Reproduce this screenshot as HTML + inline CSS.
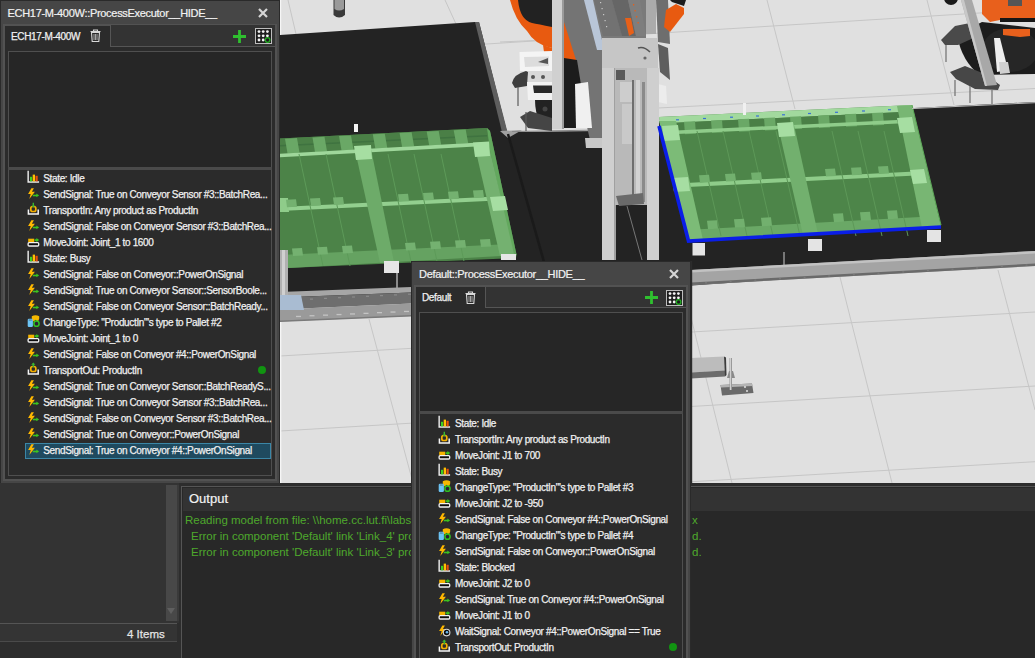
<!DOCTYPE html>
<html><head><meta charset="utf-8">
<style>
*{margin:0;padding:0;box-sizing:border-box}
html,body{width:1035px;height:658px;overflow:hidden;background:#2d2d2d;font-family:"Liberation Sans",sans-serif}
.a{position:absolute}
.t{position:absolute;white-space:pre;color:#f0f0f0;font-size:10px;letter-spacing:-0.36px;line-height:12px;-webkit-text-stroke:0.25px #f0f0f0}
.ttl{position:absolute;white-space:pre;color:#f2f2f2;font-size:11px;letter-spacing:-0.3px;line-height:13px;-webkit-text-stroke:0.2px #f2f2f2}
.row{position:absolute;height:16px;width:240px}
.row svg{position:absolute;left:0;top:2px;overflow:visible}
.row span{position:absolute;left:16px;top:2.5px;white-space:pre;color:#f0f0f0;font-size:10px;letter-spacing:-0.36px;line-height:12px;-webkit-text-stroke:0.25px #f0f0f0}
#llist .row span{left:15.5px}
.g{position:absolute;white-space:pre;color:#4ea82c;font-size:11.5px;line-height:14px}
</style></head>
<body>
<svg width="0" height="0" style="position:absolute">
<defs>
<symbol id="i-state" viewBox="0 0 13 12" overflow="visible">
<path d="M0.15 -1.2V10H11.1" stroke="#f0f0f0" stroke-width="1.4" fill="none"/>
<rect x="2" y="4.8" width="2.1" height="4.6" fill="#3cd020"/>
<rect x="4.7" y="2.6" width="2.3" height="6.8" fill="#ffc000"/>
<rect x="7.5" y="3.8" width="2.2" height="5.6" fill="#e8500a"/>
</symbol>
<symbol id="i-sig" viewBox="0 0 13 12" overflow="visible">
<path d="M3.4 0.2H5.9L3.9 3.8H6.9L1.3 10.9L2.7 5.9H0.1Z" fill="#ffb800"/>
<path d="M4.8 7.5H9" stroke="#3cc420" stroke-width="1.6"/>
<path d="M8.4 5.5L11.1 7.5L8.4 9.3Z" fill="#3cc420"/>
</symbol>
<symbol id="i-in" viewBox="0 0 13 12" overflow="visible">
<path d="M0.4 5.5V9.9H10.2V5.5" stroke="#f4f4f4" stroke-width="1.5" fill="none"/>
<rect x="2.8" y="2.5" width="5" height="5" rx="1.8" stroke="#f5b000" stroke-width="1.7" fill="none"/>
<path d="M4.6 -1.2H6V1.8H7.2L5.3 3.6L3.4 1.8H4.6Z" fill="#3cb830"/>
</symbol>
<symbol id="i-out" viewBox="0 0 13 12" overflow="visible">
<path d="M0.4 5.5V9.9H10.2V5.5" stroke="#f4f4f4" stroke-width="1.5" fill="none"/>
<rect x="2.8" y="2.5" width="5" height="5" rx="1.8" stroke="#f5b000" stroke-width="1.7" fill="none"/>
<path d="M5.3 -1.4L7.4 0.8H6V3.2H4.6V0.8H3.2Z" fill="#3cb830"/>
</symbol>
<symbol id="i-move" viewBox="0 0 13 12" overflow="visible">
<rect x="0.2" y="2.7" width="6" height="3.8" fill="#f5b400"/>
<path d="M6.6 4.1H9" stroke="#3cc420" stroke-width="1.7"/>
<path d="M8.4 1.9L11.2 4.1L8.4 6.3Z" fill="#3cc420"/>
<rect x="0.1" y="6.7" width="10.6" height="3.3" rx="1" stroke="#f2f2f2" stroke-width="1.3" fill="#0e0e0e"/>
</symbol>
<symbol id="i-chg" viewBox="0 0 13 12" overflow="visible">
<path d="M3.8 0.2Q7.5 -1.6 11.2 0.2V2.5Q11 5 9 5.4L7.5 3.8L5.8 5.5Q3.8 4.5 3.8 2.2Z" fill="#f5b800"/>
<rect x="-0.3" y="2.7" width="5.2" height="8.3" rx="1.2" fill="#6cc4f4"/>
<rect x="0.8" y="3.6" width="3" height="0.9" fill="#4a6a80"/>
<circle cx="8.5" cy="7.7" r="2.6" stroke="#30c020" stroke-width="1.5" fill="#2a1f33"/>
</symbol>
<symbol id="i-wait" viewBox="0 0 13 12" overflow="visible">
<path d="M3.4 0.4H5.9L3.9 4H6.4L1.3 11L2.7 6.1H0.1Z" fill="#ffb800"/>
<circle cx="7.6" cy="7.6" r="3.3" stroke="#d8d8d8" stroke-width="1.1" fill="#0c0c0c"/>
<circle cx="8" cy="7.3" r="1.3" fill="#6ab8f0"/>
</symbol>
<symbol id="i-trash" viewBox="0 0 11 13">
<path d="M0.5 2.5H10.5M3.5 2.5V1H7.5V2.5" stroke="#d8d8d8" stroke-width="1.1" fill="none"/>
<path d="M1.5 3.5H9.5L8.8 12.5H2.2Z" stroke="#d8d8d8" stroke-width="1.1" fill="none"/>
<path d="M4 5V11M5.5 5V11M7 5V11" stroke="#d8d8d8" stroke-width="0.7"/>
</symbol>
<symbol id="i-grid" viewBox="0 0 17 16">
<rect x="0.5" y="0.5" width="16" height="15" fill="#1e1e1e" stroke="#bdbdbd"/>
<g fill="#f4f4f4"><circle cx="4" cy="3.6" r="1.4"/><circle cx="8.2" cy="3.6" r="1.4"/><circle cx="12.4" cy="3.6" r="1.4"/>
<circle cx="4" cy="7.8" r="1.4"/><circle cx="8.2" cy="7.8" r="1.4"/><circle cx="12.4" cy="7.8" r="1.4"/>
<circle cx="4" cy="12" r="1.4"/><circle cx="8.2" cy="12" r="1.4"/></g>
<circle cx="12.6" cy="12" r="2.3" stroke="#22b022" stroke-width="1.2" fill="none"/>
</symbol>
<symbol id="i-plus" viewBox="0 0 13 13">
<path d="M6.5 0V13M0 6.5H13" stroke="#2fc02f" stroke-width="2.8"/>
</symbol>
<symbol id="i-x" viewBox="0 0 10 10">
<path d="M1 1L9 9M9 1L1 9" stroke="#d6d6d6" stroke-width="2.2"/>
</symbol>
</defs>
</svg>

<!-- 3D viewport -->
<div class="a" id="vp" style="left:280px;top:0;width:755px;height:483px;overflow:hidden;background:#e0e0e0">
<svg width="755" height="483" viewBox="280 0 755 483" style="position:absolute;left:0;top:0">
<rect x="280" y="0" width="755" height="483" fill="#e0e0e0"/>
<g stroke="#c6c6c6" stroke-width="1" fill="none">
<path d="M280 57L1035 9.5"/>
<path d="M500 42L545 40"/>
<path d="M600 111L1035 88.5"/>
<path d="M280 356L1035 312"/>
<path d="M280 431L1035 386"/>
<path d="M767 0L795 109"/>
<path d="M927 0L954 105"/>
<path d="M445 0L456 24"/>
<path d="M288 0L296 34"/>
<path d="M369 319L413 483"/>
<path d="M840 277L892 483"/>
<path d="M998 270L1035 410"/>
<path d="M692 481.7L1035 461.7"/>
<path d="M681 277L732 483"/>
</g>
<rect x="280" y="0" width="1.2" height="483" fill="#f6f6f6"/>
<!-- conveyors -->
<path d="M280 35L475 22L479 22L507 132L600 131L600 300L280 300Z" fill="#232323"/>
<path d="M598 124L1035 102L1035 262L598 292Z" fill="#232323"/>
<path d="M475 22L479 22L507.5 132L502 132Z" fill="#5e5e5e"/>
<path d="M500 131L522 130L508 138Z" fill="#a0a0a0"/>
<path d="M508 134L544 262" stroke="#1a1a1a" stroke-width="2.5"/>
<path d="M512 131.5L600 130" stroke="#8a8a8a" stroke-width="1"/>
<!-- left robot -->
<path d="M510 0H552V48Q535 45 527 31Q515 20 510 0Z" fill="#e85a10"/>
<path d="M518 0H552V27Q538 24 532 23Q520 20 518 0Z" fill="#222"/>
<path d="M543 45L552 48V53L544 52Z" fill="#e85a10"/>
<path d="M519.5 52L552 51V71L520 71Z" fill="#f4f4f4"/>
<path d="M524 57L549 56.5V66L525 67Z" fill="#dcdcdc"/>
<path d="M538 62L548 58V64Z" fill="#555"/>
<path d="M528 71H552V82H528Z" fill="#d8d8d8"/>
<circle cx="533" cy="77" r="2" fill="#555"/><circle cx="543" cy="77" r="2" fill="#555"/>
<path d="M512 83Q514 74 526 71L528 72L527 86L515 88Z" fill="#3e3e3e"/>
<path d="M518 87V106" stroke="#5a5a5a" stroke-width="1.2"/>
<path d="M527 82H552V100H528Z" fill="#f2f2f2"/>
<path d="M533 85.5H552V93H534Z" fill="#2a2a2a"/>
<path d="M535 100H552V124H540Q535 112 535 100Z" fill="#222"/>
<circle cx="545" cy="109" r="2.5" fill="#444"/>
<path d="M520 117L530 111L552 118V131L528 128Z" fill="#454545"/>
<path d="M526 112V131" stroke="#5a5a5a" stroke-width="1.2"/>
<!-- gantry -->
<path d="M558 0H600L603 40L602 140L590 140Z" fill="#747474"/>
<path d="M584 0H594L603 40L602 50L597 50Z" fill="#b9c6d8"/>
<path d="M564 22L576 60H564Z" fill="#e85a10"/>
<path d="M564 58L577 60L588 128H564Z" fill="#1c1c1c"/>
<path d="M575 84L588 82L592 128L576 128Z" fill="#f0f0f0"/>
<rect x="552" y="0" width="12" height="129" fill="#d0d0d0"/>
<rect x="562" y="0" width="2" height="129" fill="#9a9a9a"/>
<path d="M593 0H646V40H602Z" fill="#7a7a7a"/>
<path d="M594 0H612L622 36H603Z" fill="#727272"/>
<path d="M612 0H628L636 36H622Z" fill="#666"/>
<path d="M628 0H640L646 36H636Z" fill="#7e7e7e"/>
<g fill="#c8c8c8"><rect x="600" y="2" width="1.2" height="1.2"/><rect x="601.5" y="8" width="1.2" height="1.2"/><rect x="603" y="14" width="1.2" height="1.2"/><rect x="604.5" y="20" width="1.2" height="1.2"/><rect x="606" y="26" width="1.2" height="1.2"/></g>
<g fill="#e86018"><rect x="633" y="4" width="1.2" height="1.5"/><rect x="634.5" y="10" width="1.2" height="1.5"/><rect x="636" y="16" width="1.2" height="1.5"/><rect x="637.5" y="22" width="1.2" height="1.5"/></g>
<path d="M625 18L631 18L634 33L629 36Z" fill="#e86018"/>
<rect x="646" y="0" width="10" height="34" fill="#ababab"/>
<path d="M656 0H668L670 44L658 42Z" fill="#6e6e6e"/>
<path d="M666 10L676 4L684 8L684 14L670 32L664 27Z" fill="#e85a10"/>
<path d="M672 2L684 6L686 0H670Z" fill="#1c1c1c"/>
<path d="M658 44L668 48L670 80L660 72Z" fill="#5e5e5e"/>
<path d="M658 84L666 86L667 104L658 102Z" fill="#ececec"/>
<path d="M602 38H658V68H602Z" fill="#c6c6c6"/>
<path d="M638 48Q644 46 650 52" stroke="#555" stroke-width="1.5" fill="none"/>
<circle cx="645" cy="58" r="1.6" fill="#666"/>
<rect x="602" y="68" width="13" height="192" fill="#cfcfcf"/>
<rect x="647" y="68" width="12" height="192" fill="#cfcfcf"/>
<rect x="614" y="68" width="2" height="192" fill="#a0a0a0"/>
<rect x="615" y="68" width="32" height="137" fill="#b9b9b9"/>
<rect x="616" y="70" width="9" height="10" fill="#5a5a5a"/>
<rect x="620" y="82" width="12" height="20" fill="#cdcdcd"/>
<rect x="622" y="104" width="10" height="40" fill="#c9c9c9"/>
<rect x="632" y="80" width="2" height="120" fill="#6e6e6e"/>
<rect x="636" y="80" width="4" height="120" fill="#d2d2d2"/>
<rect x="642" y="82" width="3" height="120" fill="#8a8a8a"/>
<path d="M616 196L643 193L644 204L619 206Z" fill="#6a6a6a"/>
<path d="M627 206L642 260" stroke="#777" stroke-width="1"/>
<path d="M585 138L602 138V148H586Z" fill="#c8c8c8"/>
<!-- pallet 1 -->
<path d="M280 138.5L487 128L490 131L516.6 255L516 258L288 268L280 268Z" fill="#4c8348"/>
<path d="M487 128L490 131L516.6 255L513 256L486 132Z" fill="#63a85e"/>
<path d="M280 138.5L487 128L489 143L280 154Z" fill="#4a7f46"/>
<path d="M280 145L487 135L487 136.5L280 146.5Z" fill="#3f7340"/>
<path d="M285.0 138.7L297.0 138.1L299.5 152.8L287.5 153.4Z" fill="#6aa866"/>
<path d="M312.5 137.4L324.5 136.8L327.0 151.3L315.0 151.9Z" fill="#6aa866"/>
<path d="M339.0 136.0L351.0 135.4L353.5 149.8L341.5 150.4Z" fill="#6aa866"/>
<path d="M372.8 134.3L384.8 133.7L387.3 147.9L375.3 148.5Z" fill="#6aa866"/>
<path d="M399.6 132.9L411.6 132.3L414.1 146.3L402.1 146.9Z" fill="#6aa866"/>
<path d="M426.7 131.6L438.7 131.0L441.2 144.8L429.2 145.4Z" fill="#6aa866"/>
<path d="M453.7 130.2L465.7 129.6L468.2 143.3L456.2 143.9Z" fill="#6aa866"/>
<path d="M280 153.8L484 142.3L485 146L280 157.3Z" fill="#9fd79b"/>
<path d="M280 207L496 196.5L497 200.5L280 211Z" fill="#93cf8f"/>
<path d="M280 255L510 244L516.6 255L288 268L280 268Z" fill="#65a261"/>
<path d="M355 150L371 149L394 262L380 263Z" fill="#6dab69"/>
<path d="M474 143L488 142L514 254L500 256Z" fill="#74b170"/>
<path d="M354 146L371 145L372 159L356 160Z" fill="#a6dea2"/>
<path d="M473 142.5L489 141.5L490 156L475 157Z" fill="#a6dea2"/>
<path d="M490 197L505 196L508 210L493 211Z" fill="#a6dea2"/>
<path d="M280 198L288 198L289 212L280 212Z" fill="#8fcc8a"/>
<g stroke="#5d9a59" stroke-width="1">
<path d="M299 154L323 266"/>
<path d="M326 154L350 266"/>
<path d="M388 154L412 266"/>
<path d="M414 154L438 266"/>
<path d="M441 154L465 266"/>
</g>
<g fill="#74b170">
<path d="M286 199.7L296 199.2L297 206.7L287 207.2Z"/>
<path d="M310 198.5L320 198.0L321 205.5L311 206.0Z"/>
<path d="M333 197.4L343 196.9L344 204.4L334 204.9Z"/>
<path d="M398 194.3L408 193.8L409 201.3L399 201.8Z"/>
<path d="M423 193.0L433 192.5L434 200.0L424 200.5Z"/>
<path d="M448 191.8L458 191.3L459 198.8L449 199.3Z"/>
<path d="M473 190.6L483 190.1L484 197.6L474 198.1Z"/>
<path d="M292 248.4L302 247.9L303 255.4L293 255.9Z"/>
<path d="M317 247.2L327 246.7L328 254.2L318 254.7Z"/>
<path d="M342 246.0L352 245.5L353 253.0L343 253.5Z"/>
<path d="M405 243.0L415 242.5L416 250.0L406 250.5Z"/>
<path d="M430 241.8L440 241.3L441 248.8L431 249.3Z"/>
<path d="M455 240.6L465 240.1L466 247.6L456 248.1Z"/>
<path d="M480 239.4L490 238.9L491 246.4L481 246.9Z"/>
</g>
<rect x="354" y="124" width="4" height="8" fill="#f4f4f4"/>
<rect x="384" y="261" width="15" height="12" fill="#e6e6e6"/>
<rect x="501" y="254" width="15" height="6" fill="#e6e6e6"/>
<rect x="396" y="273" width="2" height="16" fill="#8a8a8a"/>
<!-- pallet 2 -->
<path d="M659 117L912 105L941 227L688 242Z" fill="#4d8549"/>
<path d="M659 117L912 105L913 111.5L660 123.5Z" fill="#a2d99e"/>
<path d="M660 123.5L913 111.5L915 120L662 132Z" fill="#4a7f46"/>
<path d="M684 121.8L695 121.3L696 133.8L685 134.3Z" fill="#6aa866"/>
<path d="M711 120.5L722 120.0L723 132.5L712 133.0Z" fill="#6aa866"/>
<path d="M738 119.3L749 118.8L750 131.3L739 131.8Z" fill="#6aa866"/>
<path d="M764 118.0L775 117.5L776 130.0L765 130.5Z" fill="#6aa866"/>
<path d="M790 116.8L801 116.3L802 128.8L791 129.3Z" fill="#6aa866"/>
<path d="M818 115.5L829 115.0L830 127.5L819 128.0Z" fill="#6aa866"/>
<path d="M845 114.2L856 113.7L857 126.2L846 126.7Z" fill="#6aa866"/>
<path d="M872 112.9L883 112.4L884 124.9L873 125.4Z" fill="#6aa866"/>
<path d="M676 130.5L897 120L898 123.5L677 134Z" fill="#8fcc8a"/>
<path d="M676 183.5L925 171L926 175L677 187.5Z" fill="#8fcc8a"/>
<path d="M686 230L938 216L941 227L688 242Z" fill="#6aa866"/>
<path d="M659 121L676 121L703 240L688 242Z" fill="#7cbb77"/>
<path d="M778 126L794 125L818 234L803 235Z" fill="#72b06e"/>
<path d="M897 106L912 105L941 226L922 228Z" fill="#78b673"/>
<path d="M662 126L678 125L680 140L664 141Z" fill="#a6dea2"/>
<path d="M672 178L688 177L690 191L674 192Z" fill="#a6dea2"/>
<path d="M777 123L793 122L795 136L779 137Z" fill="#a6dea2"/>
<path d="M897 118L912 117L915 132L900 133Z" fill="#a6dea2"/>
<path d="M910 170L924 169L927 183L913 184Z" fill="#a6dea2"/>
<g stroke="#5d9858" stroke-width="1">
<path d="M697 131L721 236"/>
<path d="M723 131L747 236"/>
<path d="M749 131L773 236"/>
<path d="M776 131L800 236"/>
<path d="M832 131L856 236"/>
<path d="M858 131L882 236"/>
<path d="M884 131L908 236"/>
</g>
<g fill="#72b06e">
<path d="M699 175.3L709 174.8L710 182.3L700 182.8Z"/>
<path d="M725 174.0L735 173.5L736 181.0L726 181.5Z"/>
<path d="M751 172.7L761 172.2L762 179.7L752 180.2Z"/>
<path d="M825 169.0L835 168.5L836 176.0L826 176.5Z"/>
<path d="M851 167.7L861 167.2L862 174.7L852 175.2Z"/>
<path d="M878 166.4L888 165.9L889 173.4L879 173.9Z"/>
<path d="M707 220.8L717 220.3L718 228.8L708 229.3Z"/>
<path d="M734 219.3L744 218.8L745 227.3L735 227.8Z"/>
<path d="M761 217.8L771 217.3L772 225.8L762 226.3Z"/>
<path d="M833 213.8L843 213.3L844 221.8L834 222.3Z"/>
<path d="M860 212.3L870 211.8L871 220.3L861 220.8Z"/>
<path d="M887 210.8L897 210.3L898 218.8L888 219.3Z"/>
</g>
<g fill="#3a6fd8">
<rect x="676" y="119.2" width="3" height="1.2"/>
<rect x="703" y="117.9" width="3" height="1.2"/>
<rect x="730" y="116.6" width="3" height="1.2"/>
<rect x="756" y="115.4" width="3" height="1.2"/>
<rect x="782" y="114.2" width="3" height="1.2"/>
<rect x="808" y="112.9" width="3" height="1.2"/>
<rect x="835" y="111.7" width="3" height="1.2"/>
<rect x="862" y="110.4" width="3" height="1.2"/>
<rect x="888" y="109.1" width="3" height="1.2"/>
</g>
<path d="M659 126L688.5 241L941 227" stroke="#0a1ee8" stroke-width="3.6" fill="none"/>
<path d="M912 105L941 225" stroke="#5da858" stroke-width="1" fill="none"/>
<rect x="692.5" y="243" width="12.5" height="12.5" fill="#e4e4e4"/>
<rect x="808" y="239" width="14" height="12" fill="#e4e4e4"/>
<rect x="927" y="230" width="14" height="12" fill="#e4e4e4"/>
<rect x="743" y="103" width="3" height="12" fill="#f0f0f0"/>
<rect x="783" y="252" width="2" height="18" fill="#777"/>
<!-- right robot -->
<path d="M957 35Q962 62 980 75L1035 74V28L982 22Z" fill="#1c1c1c"/>
<ellipse cx="1010" cy="50" rx="28" ry="22" fill="#262626"/>
<path d="M982 0H1035V20H1020L1010 18L990 22L982 14Z" fill="#e8601c"/>
<path d="M1000 18H1035V22H1000Z" fill="#161616"/>
<path d="M1003 29H1030V36L1020 37L1003 35Z" fill="#e8601c"/>
<rect x="1008" y="0" width="14" height="6" fill="#555"/>
<path d="M941 40L955 26L975 22L978 36L958 45L945 45Z" fill="#4a4a4a"/>
<path d="M950 72L965 66L985 74L1000 85L998 90L975 89L956 79Z" fill="#474747"/>
<path d="M961 0H972L997 85L985 86Z" fill="#a8a8a8"/>
<path d="M961 0H964L987 86L985 86Z" fill="#c8c8c8"/>
<path d="M994 38L1000 38L1008 70L997 72Z" fill="#eeeeee"/>
<path d="M999 62L1008 62L1010 73L1000 74Z" fill="#d0d0d0"/>
<g stroke="#777" stroke-width="1.3"><path d="M946 45V62"/><path d="M955 80V96"/><path d="M970 86V103"/><path d="M992 90V104"/></g>
<circle cx="951" cy="-2" r="7" fill="#1a1a1a"/>
<path d="M912 108.6L1035 102.7" stroke="#bbb" stroke-width="1"/>
<!-- rails -->
<path d="M280 292L411 287L411 292.5L280 297.5Z" fill="#a6a6a6"/>
<path d="M280 297.5L411 292.5L411 303.5L280 309.5Z" fill="#6e6e6e"/>
<path d="M280 309.5L411 303.5L411 316L280 321.5Z" fill="#9a9a9a"/>
<path d="M280 320.5L411 315L411 316.5L280 322Z" fill="#7a7a7a"/>
<path d="M691 270L1035 251L1035 266L691 285Z" fill="#a4a4a4"/>
<path d="M691 270L1035 251L1035 253.5L691 272.5Z" fill="#c2c2c2"/>
<path d="M691 282.5L1035 263.5L1035 266L691 285Z" fill="#6a6a6a"/>
<g fill="#c4c4c4">
<rect x="296.0" y="315.8" width="5" height="1.3"/>
<rect x="309.5" y="315.1" width="5" height="1.3"/>
<rect x="323.0" y="314.5" width="5" height="1.3"/>
<rect x="336.5" y="313.9" width="5" height="1.3"/>
<rect x="350.0" y="313.3" width="5" height="1.3"/>
<rect x="363.5" y="312.7" width="5" height="1.3"/>
<rect x="377.0" y="312.0" width="5" height="1.3"/>
<rect x="390.5" y="311.4" width="5" height="1.3"/>
<rect x="404.0" y="310.8" width="5" height="1.3"/>
</g><g fill="#8a8a8a">
<rect x="310.0" y="298.5" width="3" height="1.2"/>
<rect x="324.0" y="297.8" width="3" height="1.2"/>
<rect x="338.0" y="297.1" width="3" height="1.2"/>
<rect x="352.0" y="296.4" width="3" height="1.2"/>
<rect x="366.0" y="295.7" width="3" height="1.2"/>
<rect x="380.0" y="295.0" width="3" height="1.2"/>
<rect x="394.0" y="294.3" width="3" height="1.2"/>
<rect x="408.0" y="293.6" width="3" height="1.2"/>
</g><g fill="#7a7a7a">
<rect x="705.0" y="282.2" width="2" height="1.2"/>
<rect x="729.6" y="280.9" width="2" height="1.2"/>
<rect x="754.3" y="279.5" width="2" height="1.2"/>
<rect x="779.0" y="278.1" width="2" height="1.2"/>
<rect x="803.6" y="276.8" width="2" height="1.2"/>
<rect x="828.2" y="275.4" width="2" height="1.2"/>
<rect x="852.9" y="274.1" width="2" height="1.2"/>
<rect x="877.5" y="272.7" width="2" height="1.2"/>
<rect x="902.2" y="271.3" width="2" height="1.2"/>
<rect x="926.9" y="270.0" width="2" height="1.2"/>
<rect x="951.5" y="268.6" width="2" height="1.2"/>
<rect x="976.1" y="267.3" width="2" height="1.2"/>
<rect x="1000.8" y="265.9" width="2" height="1.2"/>
<rect x="1025.5" y="264.5" width="2" height="1.2"/></g>
<rect x="280" y="322" width="1.2" height="161" fill="#f6f6f6"/>
<!-- left post -->
<rect x="280" y="250" width="8" height="53" fill="#b0b0b0"/>
<rect x="282" y="250" width="3" height="53" fill="#d0d0d0"/>
<path d="M280 295H301L304 310H280Z" fill="#a9bcd2"/>
<!-- top-left small cylinder -->
<path d="M333.5 0H345V15Q339 20 333.5 15Z" fill="#3a3a3a"/>
<path d="M334.5 0H344V9Q339 12 334.5 9Z" fill="#9a9a9a"/>
<!-- floor objects right -->
<path d="M691 358L724 356.5L725 370.5L691 372.5Z" fill="#bcbcbc"/>
<path d="M691 372.5L725 370.5L725 376.5L691 378.5Z" fill="#6c6c6c"/>
<path d="M724 356.5L726 357.5L726.5 375L725 376.5Z" fill="#3c3c3c"/>
<path d="M720.5 385L752 383.5L753.5 393L722 395.5Z" fill="#6a6a6a"/>
<path d="M720.5 385L752 383.5L752.5 386L721 387.5Z" fill="#b4b4b4"/>
<circle cx="745" cy="387" r="0.9" fill="#eee"/><circle cx="747" cy="391" r="0.9" fill="#eee"/>
<path d="M727 378L735 378L733 371L729 371Z" fill="#8a8a8a"/>
<rect x="729.5" y="358" width="2.5" height="32" fill="#9a9a9a"/>
<rect x="730" y="358" width="1" height="32" fill="#d0d0d0"/>
<rect x="691" y="261" width="1.2" height="222" fill="#2c2c2c"/>
</svg>
</div>

<!-- left panel -->
<div class="a" style="left:0;top:0;width:280px;height:483px;background:#2a2a2a">
<div class="a" style="left:1px;top:1px;width:278px;height:482px;background:#464646"></div>
<div class="ttl" style="left:7.5px;top:6.5px">ECH17-M-400W::ProcessExecutor__HIDE__</div>
<svg class="a" style="left:258px;top:8px" width="10" height="10"><use href="#i-x"/></svg>
<div class="a" style="left:3px;top:24px;width:274px;height:457px;border:2px solid #525252;background:#2b2b2b"></div>
<div class="a" style="left:110px;top:25px;width:165px;height:22px;background:#333;border-left:1px solid #555;border-bottom:1px solid #555"></div>
<div class="t" style="left:11px;top:31px">ECH17-M-400W</div>
<svg class="a" style="left:90px;top:29px" width="11" height="13"><use href="#i-trash"/></svg>
<svg class="a" style="left:233px;top:30px" width="13" height="13"><use href="#i-plus"/></svg>
<svg class="a" style="left:255px;top:28px" width="17" height="16"><use href="#i-grid"/></svg>
<div class="a" style="left:8px;top:51px;width:264px;height:117px;background:#262626;border:1px solid #4f4f4f"></div>
<div class="a" style="left:8px;top:167px;width:264px;height:3px;background:#4a4a4a"></div>
<div class="a" style="left:8px;top:170px;width:264px;height:306px;background:#2b2b2b;border:1px solid #4f4f4f;border-top:none"></div>
<div class="a" style="left:25px;top:443px;width:246px;height:16px;background:#1f4a5f;border:1px solid #3b86a6"></div>
<div id="llist" class="a" style="left:27.8px;top:170px">
<div class="row" style="top:0"><svg width="13" height="12"><use href="#i-state"/></svg><span>State: Idle</span></div>
<div class="row" style="top:16px"><svg width="13" height="12"><use href="#i-sig"/></svg><span>SendSignal: True on Conveyor Sensor #3::BatchRea...</span></div>
<div class="row" style="top:32px"><svg width="13" height="12"><use href="#i-in"/></svg><span>TransportIn: Any product as ProductIn</span></div>
<div class="row" style="top:48px"><svg width="13" height="12"><use href="#i-sig"/></svg><span>SendSignal: False on Conveyor Sensor #3::BatchRea...</span></div>
<div class="row" style="top:64px"><svg width="13" height="12"><use href="#i-move"/></svg><span>MoveJoint: Joint_1 to 1600</span></div>
<div class="row" style="top:80px"><svg width="13" height="12"><use href="#i-state"/></svg><span>State: Busy</span></div>
<div class="row" style="top:96px"><svg width="13" height="12"><use href="#i-sig"/></svg><span>SendSignal: False on Conveyor::PowerOnSignal</span></div>
<div class="row" style="top:112px"><svg width="13" height="12"><use href="#i-sig"/></svg><span>SendSignal: True on Conveyor Sensor::SensorBoole...</span></div>
<div class="row" style="top:128px"><svg width="13" height="12"><use href="#i-sig"/></svg><span>SendSignal: False on Conveyor Sensor::BatchReady...</span></div>
<div class="row" style="top:144px"><svg width="13" height="12"><use href="#i-chg"/></svg><span>ChangeType: "ProductIn"'s type to Pallet #2</span></div>
<div class="row" style="top:160px"><svg width="13" height="12"><use href="#i-move"/></svg><span>MoveJoint: Joint_1 to 0</span></div>
<div class="row" style="top:176px"><svg width="13" height="12"><use href="#i-sig"/></svg><span>SendSignal: False on Conveyor #4::PowerOnSignal</span></div>
<div class="row" style="top:192px"><svg width="13" height="12"><use href="#i-out"/></svg><span>TransportOut: ProductIn</span></div>
<div class="row" style="top:208px"><svg width="13" height="12"><use href="#i-sig"/></svg><span>SendSignal: True on Conveyor Sensor::BatchReadyS...</span></div>
<div class="row" style="top:224px"><svg width="13" height="12"><use href="#i-sig"/></svg><span>SendSignal: True on Conveyor Sensor #3::BatchRea...</span></div>
<div class="row" style="top:240px"><svg width="13" height="12"><use href="#i-sig"/></svg><span>SendSignal: False on Conveyor Sensor #3::BatchRea...</span></div>
<div class="row" style="top:256px"><svg width="13" height="12"><use href="#i-sig"/></svg><span>SendSignal: True on Conveyor::PowerOnSignal</span></div>
<div class="row" style="top:272px"><svg width="13" height="12"><use href="#i-sig"/></svg><span>SendSignal: True on Conveyor #4::PowerOnSignal</span></div>
</div>
<div class="a" style="left:258px;top:366px;width:8px;height:8px;border-radius:50%;background:#119411"></div>
</div>

<!-- bottom left -->
<div class="a" style="left:0;top:483px;width:179px;height:140px;background:#333333"></div>
<div class="a" style="left:165.5px;top:485px;width:11px;height:136px;background:#484848"></div>
<div class="a" style="left:176.5px;top:485px;width:2.5px;height:136px;background:#3a3a3a"></div>
<div class="a" style="left:167px;top:608px;width:0;height:0;border-left:4px solid transparent;border-right:4px solid transparent;border-top:6px solid #5f5f5f"></div>
<div class="a" style="left:0;top:623px;width:177px;height:1px;background:#555"></div>
<div class="a" style="left:0;top:624px;width:177px;height:17px;background:#343434"></div>
<div class="a" style="left:0;top:641px;width:177px;height:1px;background:#4a4a4a"></div>
<div class="t" style="left:127px;top:628px;font-size:11.5px;letter-spacing:0;color:#dcdcdc;line-height:13px">4 Items</div>

<!-- output panel -->
<div class="a" style="left:181px;top:486px;width:854px;height:172px;background:#282828;border-left:1.5px solid #555;border-top:1.5px solid #555"></div>
<div class="a" style="left:182.5px;top:487.5px;width:853px;height:23.5px;background:#333333"></div>
<div class="ttl" style="left:189px;top:492px;font-size:13px;letter-spacing:0">Output</div>
<div class="g" style="left:185px;top:513px">Reading model from file: \\home.cc.lut.fi\labs\ECH17\model.vcmx</div>
<div class="g" style="left:191px;top:529px">Error in component 'Default' link 'Link_4' property 'Node' failed.</div>
<div class="g" style="left:191px;top:545px">Error in component 'Default' link 'Link_3' property 'Node' failed.</div>
<div class="g" style="left:692px;top:513px">x</div>
<div class="g" style="left:692px;top:529px">d.</div>
<div class="g" style="left:692px;top:545px">d.</div>

<!-- floating window -->
<div class="a" style="left:411px;top:261px;width:280px;height:397px;background:#2a2a2a"></div>
<div class="a" style="left:412px;top:262px;width:278px;height:396px;background:#464646"></div>
<div class="ttl" style="left:419px;top:268px">Default::ProcessExecutor__HIDE__</div>
<svg class="a" style="left:669px;top:269px" width="10" height="10"><use href="#i-x"/></svg>
<div class="a" style="left:414px;top:285px;width:274px;height:380px;border:2px solid #525252;background:#2b2b2b"></div>
<div class="a" style="left:485px;top:287px;width:201px;height:21px;background:#333;border-left:1px solid #555;border-bottom:1px solid #555"></div>
<div class="t" style="left:422px;top:292px">Default</div>
<svg class="a" style="left:465px;top:291px" width="11" height="13"><use href="#i-trash"/></svg>
<svg class="a" style="left:645px;top:291px" width="13" height="13"><use href="#i-plus"/></svg>
<svg class="a" style="left:666px;top:290px" width="17" height="16"><use href="#i-grid"/></svg>
<div class="a" style="left:419px;top:312px;width:264px;height:100px;background:#262626;border:1px solid #4f4f4f"></div>
<div class="a" style="left:419px;top:411px;width:264px;height:3px;background:#4a4a4a"></div>
<div class="a" style="left:419px;top:414px;width:264px;height:250px;background:#2b2b2b;border:1px solid #4f4f4f;border-top:none"></div>
<div id="rlist" class="a" style="left:439px;top:415px">
<div class="row" style="top:0"><svg width="13" height="12"><use href="#i-state"/></svg><span>State: Idle</span></div>
<div class="row" style="top:16px"><svg width="13" height="12"><use href="#i-in"/></svg><span>TransportIn: Any product as ProductIn</span></div>
<div class="row" style="top:32px"><svg width="13" height="12"><use href="#i-move"/></svg><span>MoveJoint: J1 to 700</span></div>
<div class="row" style="top:48px"><svg width="13" height="12"><use href="#i-state"/></svg><span>State: Busy</span></div>
<div class="row" style="top:64px"><svg width="13" height="12"><use href="#i-chg"/></svg><span>ChangeType: "ProductIn"'s type to Pallet #3</span></div>
<div class="row" style="top:80px"><svg width="13" height="12"><use href="#i-move"/></svg><span>MoveJoint: J2 to -950</span></div>
<div class="row" style="top:96px"><svg width="13" height="12"><use href="#i-sig"/></svg><span>SendSignal: False on Conveyor #4::PowerOnSignal</span></div>
<div class="row" style="top:112px"><svg width="13" height="12"><use href="#i-chg"/></svg><span>ChangeType: "ProductIn"'s type to Pallet #4</span></div>
<div class="row" style="top:128px"><svg width="13" height="12"><use href="#i-sig"/></svg><span>SendSignal: False on Conveyor::PowerOnSignal</span></div>
<div class="row" style="top:144px"><svg width="13" height="12"><use href="#i-state"/></svg><span>State: Blocked</span></div>
<div class="row" style="top:160px"><svg width="13" height="12"><use href="#i-move"/></svg><span>MoveJoint: J2 to 0</span></div>
<div class="row" style="top:176px"><svg width="13" height="12"><use href="#i-sig"/></svg><span>SendSignal: True on Conveyor #4::PowerOnSignal</span></div>
<div class="row" style="top:192px"><svg width="13" height="12"><use href="#i-move"/></svg><span>MoveJoint: J1 to 0</span></div>
<div class="row" style="top:208px"><svg width="13" height="12"><use href="#i-wait"/></svg><span>WaitSignal: Conveyor #4::PowerOnSignal == True</span></div>
<div class="row" style="top:224px"><svg width="13" height="12"><use href="#i-out"/></svg><span>TransportOut: ProductIn</span></div>
</div>
<div class="a" style="left:669px;top:643px;width:8px;height:8px;border-radius:50%;background:#119411"></div>

</body></html>
